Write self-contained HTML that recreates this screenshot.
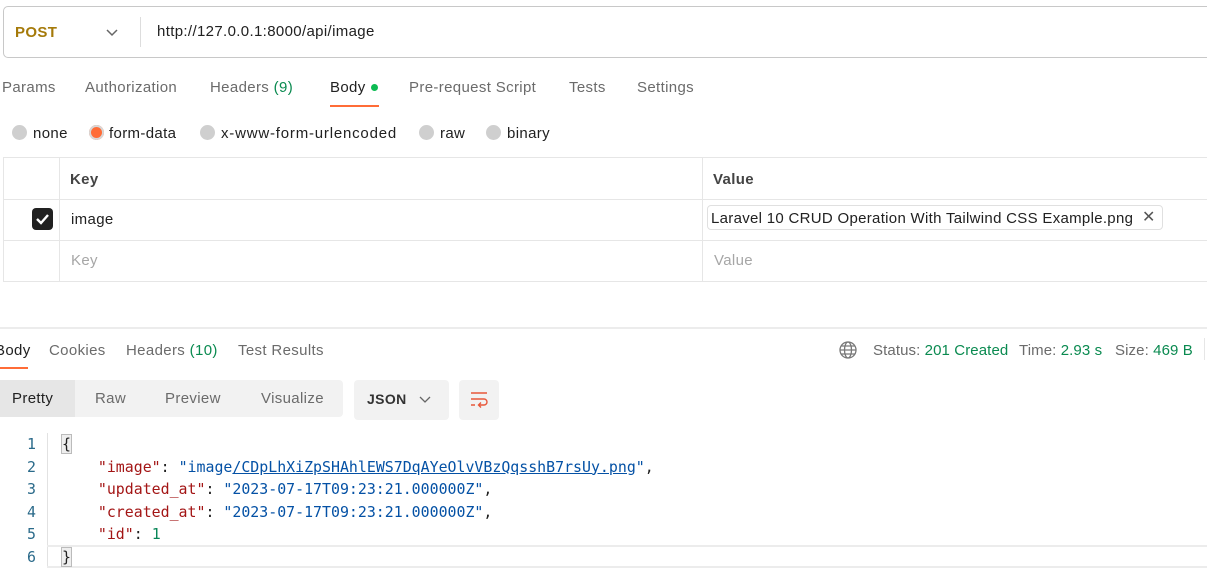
<!DOCTYPE html>
<html><head><style>
*{margin:0;padding:0;box-sizing:border-box}
body{width:1207px;height:572px;overflow:hidden;background:#fff;font-family:"Liberation Sans",sans-serif;font-size:15px;letter-spacing:0.35px;color:#212121;position:relative}
.a{position:absolute;white-space:nowrap}
.g{color:#6b6b6b}
.mono{font-family:"DejaVu Sans Mono","Liberation Mono",monospace;font-size:14.9px;letter-spacing:0}
.rad{position:absolute;width:15px;height:15px;border-radius:50%;background:#cfcfcf}
.hl{position:absolute;background:#e6e6e6;height:1px}
.vl{position:absolute;background:#e6e6e6;width:1px}
</style></head><body>
<div class="a" style="left:3px;top:6px;width:1210px;height:52px;border:1px solid #c8c8c8;border-radius:5px"></div>
<div class="a" style="left:15px;top:24px;color:#a57a0a;font-weight:bold;font-size:15px">POST</div>
<svg class="a" style="left:105px;top:28px" width="14" height="10"><path d="M2 2 L7 7 L12 2" stroke="#666" stroke-width="1.5" fill="none"/></svg>
<div class="vl" style="left:140px;top:17px;height:30px;background:#ddd"></div>
<div class="a" style="left:157px;top:23px">http://127.0.0.1:8000/api/image</div>

<div class="a g" style="left:2px;top:79px">Params</div>
<div class="a g" style="left:85px;top:79px">Authorization</div>
<div class="a g" style="left:210px;top:79px">Headers <span style="color:#0a8a50">(9)</span></div>
<div class="a" style="left:330px;top:79px">Body</div>
<div class="a" style="left:371px;top:84px;width:7px;height:7px;border-radius:50%;background:#0cbb52"></div>
<div class="a" style="left:330px;top:105px;width:49px;height:2px;background:#ff6c37"></div>
<div class="a g" style="left:409px;top:79px">Pre-request Script</div>
<div class="a g" style="left:569px;top:79px">Tests</div>
<div class="a g" style="left:637px;top:79px">Settings</div>

<div class="rad" style="left:12px;top:125px"></div><div class="a" style="left:33px;top:125px">none</div>
<div class="rad" style="left:89px;top:125px;background:#ff6c37;box-shadow:0 0 0 2px #d8d8d8 inset"></div><div class="a" style="left:109px;top:125px">form-data</div>
<div class="rad" style="left:200px;top:125px"></div><div class="a" style="left:221px;top:125px;letter-spacing:0.8px">x-www-form-urlencoded</div>
<div class="rad" style="left:419px;top:125px"></div><div class="a" style="left:440px;top:125px">raw</div>
<div class="rad" style="left:486px;top:125px"></div><div class="a" style="left:507px;top:125px">binary</div>

<div class="hl" style="left:3px;top:157px;width:1204px"></div>
<div class="hl" style="left:3px;top:199px;width:1204px"></div>
<div class="hl" style="left:3px;top:240px;width:1204px"></div>
<div class="hl" style="left:3px;top:281px;width:1204px"></div>
<div class="vl" style="left:3px;top:157px;height:125px"></div>
<div class="vl" style="left:59px;top:157px;height:125px"></div>
<div class="vl" style="left:702px;top:157px;height:125px"></div>
<div class="a" style="left:70px;top:171px;font-weight:bold;color:#444">Key</div>
<div class="a" style="left:713px;top:171px;font-weight:bold;color:#444">Value</div>
<div class="a" style="left:32px;top:208px;width:21px;height:22px;background:#212121;border-radius:4px"></div>
<svg class="a" style="left:32px;top:208px" width="21" height="22"><path d="M5 11 L9 15 L16 7" stroke="#fff" stroke-width="2.4" fill="none"/></svg>
<div class="a" style="left:71px;top:211px">image</div>
<div class="a" style="left:707px;top:205px;width:456px;height:25px;border:1px solid #e0e0e0;border-radius:4px"></div>
<div class="a" style="left:711px;top:210px;letter-spacing:0.3px">Laravel 10 CRUD Operation With Tailwind CSS Example.png</div>
<div class="a" style="left:1142px;top:207px;font-size:16px;color:#555">✕</div>
<div class="a" style="left:71px;top:252px;color:#a6a6a6">Key</div>
<div class="a" style="left:714px;top:252px;color:#a6a6a6">Value</div>

<div class="a" style="left:0;top:327px;width:1207px;height:2px;background:#ececec"></div>
<div class="a" style="left:-5px;top:342px">Body</div>
<div class="a" style="left:0;top:367px;width:28px;height:2px;background:#ff6c37"></div>
<div class="a g" style="left:49px;top:342px">Cookies</div>
<div class="a g" style="left:126px;top:342px">Headers <span style="color:#0a8a50">(10)</span></div>
<div class="a g" style="left:238px;top:342px">Test Results</div>
<svg class="a" style="left:838px;top:340px" width="20" height="20" fill="none" stroke="#777" stroke-width="1.3"><circle cx="10" cy="10" r="8"/><ellipse cx="10" cy="10" rx="3.5" ry="8"/><path d="M2 10H18M3.5 6H16.5M3.5 14H16.5"/></svg>
<div class="a g" style="left:873px;top:342px;letter-spacing:0.1px">Status: <span style="color:#0a8a50">201 Created</span></div>
<div class="a g" style="left:1019px;top:342px;letter-spacing:0.1px">Time: <span style="color:#0a8a50">2.93 s</span></div>
<div class="a g" style="left:1115px;top:342px;letter-spacing:0.1px">Size: <span style="color:#0a8a50">469 B</span></div>
<div class="vl" style="left:1204px;top:338px;height:22px"></div>

<div class="a" style="left:0;top:380px;width:343px;height:37px;background:#f2f2f2;border-radius:0 4px 4px 0"></div>
<div class="a" style="left:0;top:380px;width:75px;height:37px;background:#e6e6e6"></div>
<div class="a" style="left:12px;top:390px">Pretty</div>
<div class="a g" style="left:95px;top:390px">Raw</div>
<div class="a g" style="left:165px;top:390px">Preview</div>
<div class="a g" style="left:261px;top:390px">Visualize</div>
<div class="a" style="left:354px;top:380px;width:95px;height:40px;background:#f2f2f2;border-radius:4px"></div>
<div class="a" style="left:367px;top:391px;font-weight:bold;font-size:14px;color:#333">JSON</div>
<svg class="a" style="left:419px;top:395px" width="12" height="9"><path d="M1 2 L6 7 L11 2" stroke="#666" stroke-width="1.3" fill="none"/></svg>
<div class="a" style="left:459px;top:380px;width:40px;height:40px;background:#f2f2f2;border-radius:4px"></div>
<svg class="a" style="left:469px;top:390px" width="20" height="20" fill="none" stroke="#e8573a" stroke-width="1.4"><path d="M2 3H18M2 9H15a3 3 0 0 1 0 6H10M12 12.5L9.5 15L12 17.5M2 15H6"/></svg>

<div class="vl" style="left:47px;top:433px;height:135px;background:#e2e2e2"></div>
<div class="hl" style="left:47px;top:545px;width:1160px;height:2px;background:#ececec"></div>
<div class="hl" style="left:47px;top:566px;width:1160px;height:2px;background:#ececec"></div>
<div class="a mono" style="left:20px;top:433px;line-height:22.6px;color:#2a6a8a;text-align:right;width:16px">1<br>2<br>3<br>4<br>5<br>6</div>
<div class="a mono" style="left:62px;top:433px;line-height:22.6px;color:#212121">
<span style="outline:1px solid #bbb;background:#eee">{</span><br>
&nbsp;&nbsp;&nbsp;&nbsp;<span style="color:#a31515">"image"</span>: <span style="color:#0451a5">"image<span style="text-decoration:underline">/CDpLhXiZpSHAhlEWS7DqAYeOlvVBzQqsshB7rsUy.png</span>"</span>,<br>
&nbsp;&nbsp;&nbsp;&nbsp;<span style="color:#a31515">"updated_at"</span>: <span style="color:#0451a5">"2023-07-17T09:23:21.000000Z"</span>,<br>
&nbsp;&nbsp;&nbsp;&nbsp;<span style="color:#a31515">"created_at"</span>: <span style="color:#0451a5">"2023-07-17T09:23:21.000000Z"</span>,<br>
&nbsp;&nbsp;&nbsp;&nbsp;<span style="color:#a31515">"id"</span>: <span style="color:#098658">1</span><br>
<span style="outline:1px solid #bbb;background:#eee">}</span></div>
</body></html>
